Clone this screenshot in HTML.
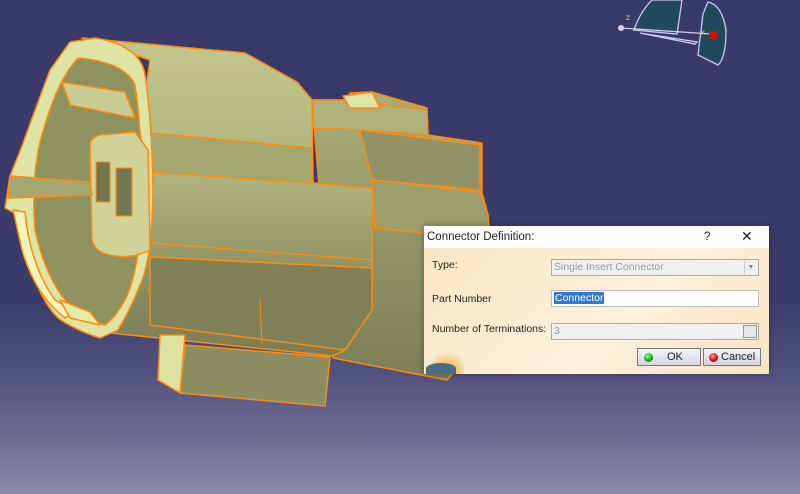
<!DOCTYPE html>
<html><head><meta charset="utf-8"><style>
html,body{margin:0;padding:0}
body{width:800px;height:494px;overflow:hidden;position:relative;font-family:"Liberation Sans",sans-serif;
background:linear-gradient(to bottom,#3a3a6a 0px,#3c3c6c 300px,#545480 380px,#6e6e94 440px,#8a8aa8 494px);}
svg{position:absolute;left:0;top:0}
.dlg{position:absolute;left:424px;top:226px;width:345px;height:148px;background:linear-gradient(135deg,#fbe6c2,#fdf0dc 60%,#fbe3c0);box-shadow:0 0 6px rgba(0,0,0,.35);font-size:11px;color:#222}
.tb{height:22px;background:#fff;position:relative}
.tb span{position:absolute;left:3px;top:5px;font-size:11.5px}
.lbl{position:absolute;font-size:10.5px}
.fld{position:absolute;left:127px;width:208px;height:15px;border:1px solid #aaa;background:#f0f0f0;font-size:10.5px;color:#999;box-sizing:border-box;padding-left:2px;line-height:13px}
.btn{position:absolute;top:122px;height:18px;border:1px solid #777;background:linear-gradient(#f4f4fa,#d4d4e0);box-sizing:border-box;font-size:11px;line-height:16px}
.ball{position:absolute;top:4px;width:9px;height:9px;border-radius:50%}
</style></head><body>
<svg width="800" height="494" viewBox="0 0 800 494">
<defs>
<linearGradient id="bd" x1="0" y1="0" x2="0" y2="1">
<stop offset="0" stop-color="#c4c78e"/><stop offset="0.45" stop-color="#aeb27a"/><stop offset="0.75" stop-color="#8d9063"/><stop offset="1" stop-color="#7a7c55"/></linearGradient>
<linearGradient id="rt" x1="0" y1="0" x2="0" y2="1">
<stop offset="0" stop-color="#a9ad76"/><stop offset="1" stop-color="#7c7f57"/></linearGradient>
</defs>
<g stroke="#ff8a10" stroke-width="1.5" stroke-linejoin="round">
<!-- right section -->
<polygon points="312,100 345,100 350,93 372,92 427,108 428,135 482,143 482,193 488,215 490,330 447,380 333,358" fill="url(#rt)"/>
<polygon points="313,100 345,100 427,110 428,135 360,130 313,128" fill="#aeb27a"/>
<polygon points="360,130 480,145 480,190 372,180" fill="#8f9365"/>
<polygon points="372,180 480,192 488,215 490,240 375,228" fill="#9a9e6c"/>
<polygon points="343,96 372,92 380,108 350,108" fill="#e0e3aa"/>
<!-- main body -->
<polygon points="82,38 245,53 297,82 312,100 313,183 372,188 372,310 345,350 333,356 110,333 150,60" fill="url(#bd)"/>
<polygon points="148,133 312,148 313,183 150,172" fill="#a3a770"/>
<polyline points="152,243 372,260" fill="none"/>
<polyline points="155,257 373,268" fill="none"/>
<polyline points="147,290 370,307" fill="none"/>
<polygon points="150,257 372,268 372,310 345,350 150,325" fill="#7f8159"/>
<polyline points="260,300 262,345" fill="none" stroke-width="1"/>
<!-- bottom block -->
<polygon points="185,345 330,357 325,406 180,393" fill="#8a8e62"/>
<polygon points="160,335 185,335 180,393 158,380" fill="#dde2a0"/>
<!-- front ring -->
<path d="M70,42 L95,38 Q140,45 145,75 Q152,120 153,190 Q152,260 140,285 Q130,310 118,330 L100,338 Q75,330 58,318 Q40,300 28,260 L18,215 L5,208 L10,176 L22,146 Q35,110 50,70 Z" fill="#dfe3a4"/>
<path d="M78,58 Q125,62 135,85 Q142,130 142,200 Q140,270 125,300 Q115,318 105,325 Q80,318 65,300 Q45,275 35,230 Q30,170 45,125 Q58,80 78,58 Z" fill="#8e925f"/>
<path d="M90,145 Q90,138 100,135 L135,132 L148,150 L150,250 Q130,260 110,255 Q95,252 92,240 Z" fill="#cfd398"/>
<rect x="96" y="162" width="14" height="40" fill="#74764f" stroke-width="1"/>
<rect x="116" y="168" width="16" height="48" fill="#74764f" stroke-width="1"/>
<path d="M10,176 L90,182 L92,195 L8,198 Z" fill="#a4a870"/>
<path d="M62,82 L125,92 L135,118 L70,105 Z" fill="#c8cc92"/>
<path d="M13,210 L25,212 Q30,265 55,300 L75,312 L65,318 Q35,295 22,250 Z" fill="#f2f5bc"/>
<path d="M60,300 L90,312 L100,325 L70,318 Z" fill="#e8eca8"/>
</g>
<!-- compass -->
<g stroke="#d0c8f0" stroke-width="1.3" fill="#1f4a5c">
<path d="M652,0 L682,0 L677,34 L634,30 Q640,12 652,0 Z"/>
<path d="M708,2 Q722,5 726,30 Q726,58 718,65 L698,55 L703,14 Z"/>
<path d="M640,33 L695,44 L697,42 Z"/>
<line x1="621" y1="28" x2="712" y2="34"/>
</g>
<circle cx="621" cy="28" r="3" fill="#d8d0f0"/>
<rect x="709" y="31" width="8" height="8" fill="#d01010"/>
<text x="626" y="20" font-size="8" fill="#e0d040" font-family="Liberation Sans">z</text>
<text x="701" y="35" font-size="8" fill="#e0d040" font-family="Liberation Sans">x</text>
</svg>
<div class="dlg">
<div class="tb"><span>Connector Definition:</span><span style="left:280px">?</span><span style="left:317px;font-size:14px;top:2px">✕</span></div>
<div class="lbl" style="left:8px;top:33px">Type:</div>
<div class="fld" style="top:33px;height:17px;line-height:15px">Single Insert Connector<span style="position:absolute;right:1px;top:1px;width:12px;height:13px;border-left:1px solid #ccc;color:#888;font-size:7px;text-align:center;line-height:13px">▼</span></div>
<div class="lbl" style="left:8px;top:67px">Part Number</div>
<div class="fld" style="top:64px;height:17px;background:#fff;color:#fff;border-color:#bbb;line-height:15px"><span style="background:#3078d8;padding:0 1px">Connector</span></div>
<div class="lbl" style="left:8px;top:97px">Number of Terminations:</div>
<div class="fld" style="top:97px;height:17px;line-height:15px">3<span style="position:absolute;right:1px;top:1px;width:14px;height:13px;border:1px solid #999;box-sizing:border-box;background:#e8e8e8"></span></div>
<div style="position:absolute;left:0;top:122px;width:40px;height:26px;background:radial-gradient(circle at 60% 90%,#f0a040 0,#f8c880 30%,rgba(250,220,180,0) 60%)"></div>
<div style="position:absolute;left:2px;top:137px;width:30px;height:11px;border-radius:50% 50% 0 0;background:#4a6a8a"></div>
<div class="btn" style="left:213px;width:64px"><span class="ball" style="left:6px;background:radial-gradient(circle at 40% 35%,#9f9,#0a0 60%,#060)"></span><span style="position:absolute;left:29px">OK</span></div>
<div class="btn" style="left:279px;width:58px"><span class="ball" style="left:5px;background:radial-gradient(circle at 40% 35%,#f99,#d00 60%,#700)"></span><span style="position:absolute;left:17px">Cancel</span></div>
</div>
</body></html>
